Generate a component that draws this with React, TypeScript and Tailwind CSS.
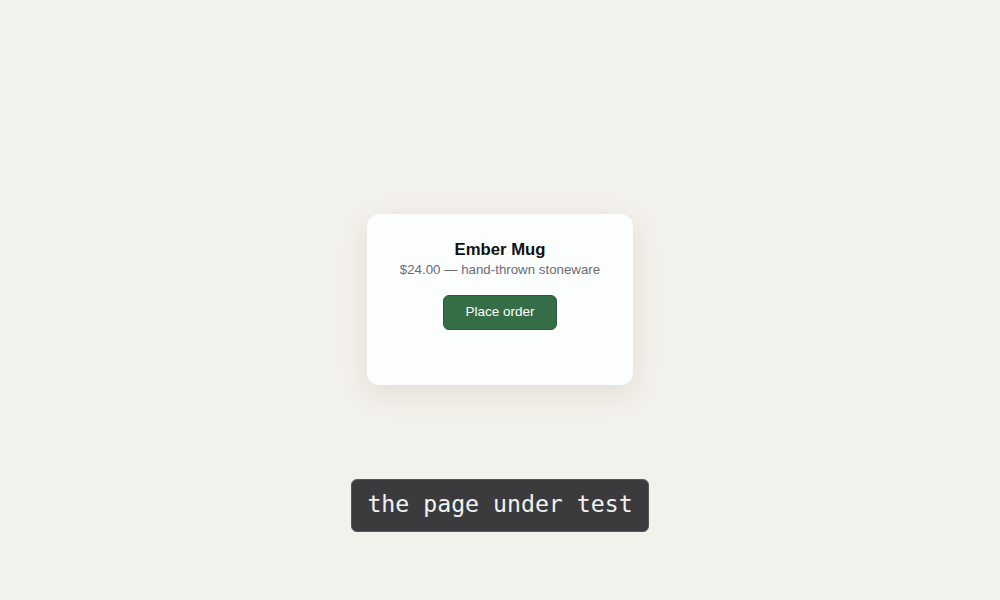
export default function App() {
  return (
    <div className="flex h-[600px] w-full flex-col items-center bg-[#f3f1ec] pt-[214px]" style={{ fontFamily: '"Liberation Sans", Arial, sans-serif' }}>
      <div className="flex h-[171px] w-[266px] flex-col items-center rounded-[12px] bg-[#fcfdfd] pt-[25px] shadow-[0_8px_28px_rgba(120,90,60,0.12)]">
        <h1 className="text-[16.7px] font-bold leading-[22px] text-[#111111]">Ember Mug</h1>
        <p className="mt-[-1px] text-[13.3px] leading-[20px] text-[#6b6b78]">$24.00 — hand-thrown stoneware</p>
        <button className="mt-[15px] h-[35px] w-[114px] rounded-[6px] border border-[#2a5a39] bg-[#356d46] text-[13.5px] text-white">
          Place order
        </button>
      </div>
      <div className="mt-[94px] flex h-[53px] w-[298px] items-center justify-center rounded-[6px] border border-[#55555a] bg-[#3b3b3d] pb-[3px] text-[23.2px] text-[#f2f2f2]" style={{ fontFamily: '"DejaVu Sans Mono", monospace' }}>
        the page under test
      </div>
    </div>
  );
}
